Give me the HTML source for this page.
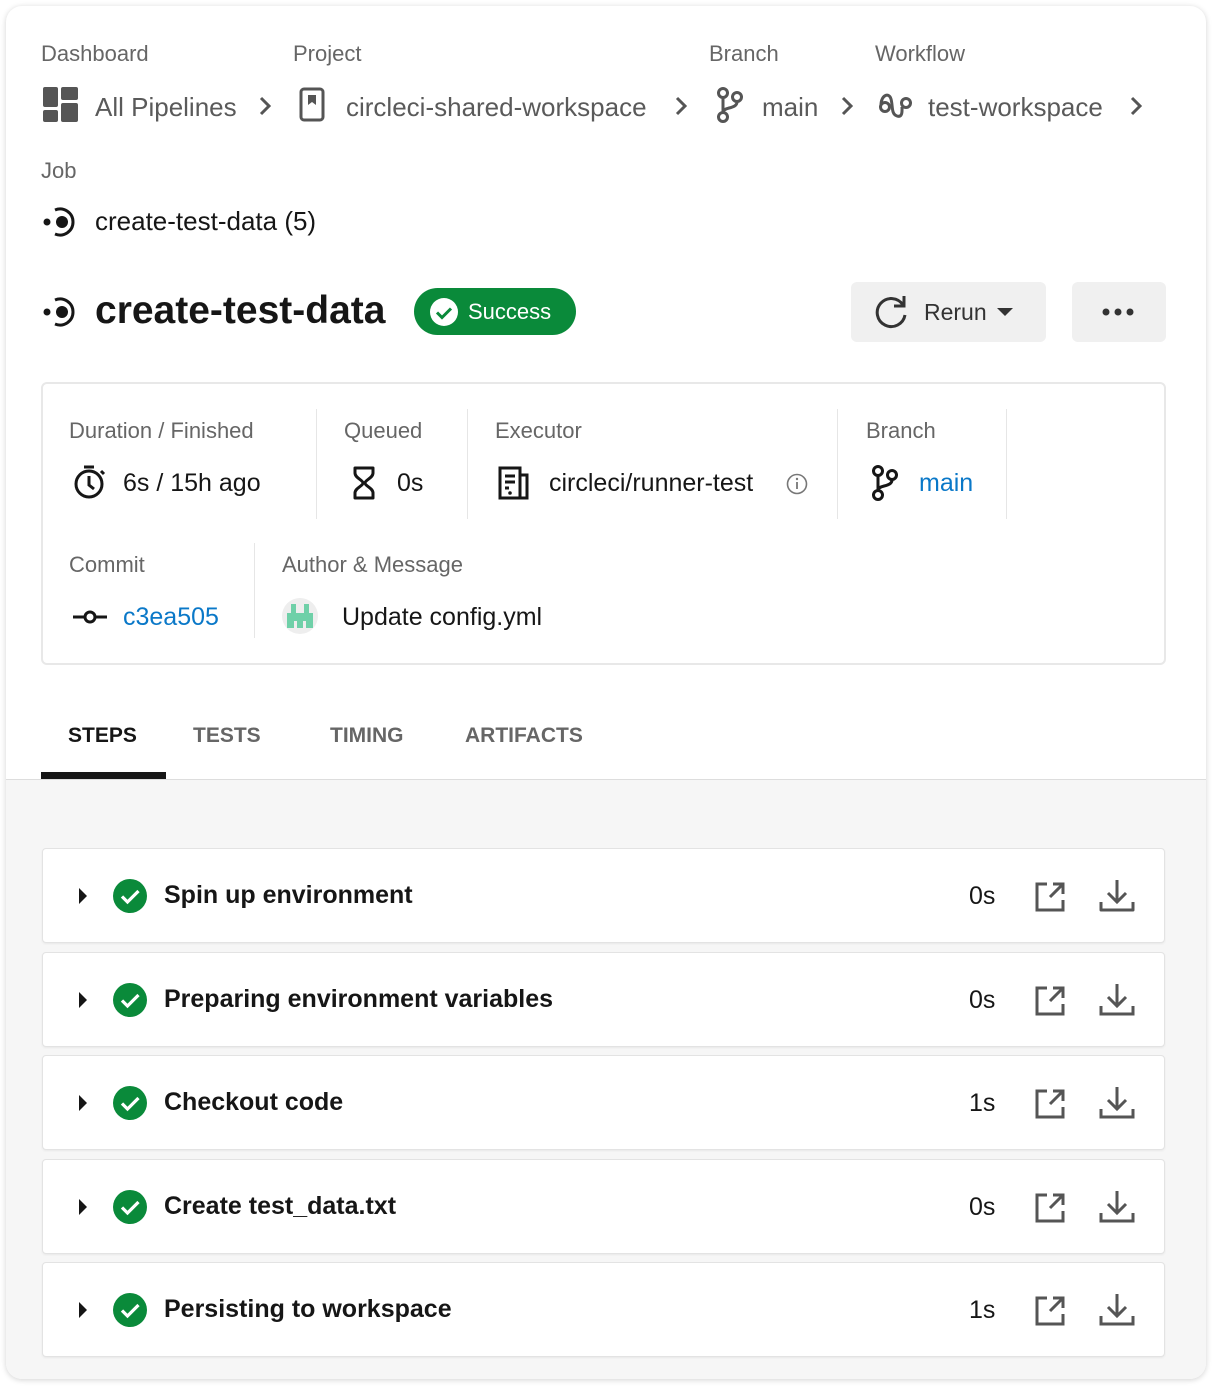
<!DOCTYPE html>
<html><head><meta charset="utf-8"><style>
*{margin:0;padding:0;box-sizing:border-box}
body{width:1220px;height:1392px;background:#fff;font-family:"Liberation Sans",sans-serif;position:relative;overflow:hidden}
.card{position:absolute;left:6px;top:6px;width:1200px;height:1373px;border-radius:16px;background:#fff;box-shadow:0 1px 6px rgba(0,0,0,.18);overflow:hidden}
.gray{position:absolute;left:0;top:773px;width:1200px;height:600px;background:#f6f6f6;border-top:1px solid #ddd}
.a{position:absolute;white-space:nowrap}
.lbl{font-size:22px;color:#666}
.bc{font-size:26px;color:#5a5a5a;top:86px}
.val{font-size:25px;color:#161616}
.sep{position:absolute;width:1px;background:#e6e6e6}
.row{position:absolute;left:36px;width:1123px;height:95px;background:#fff;border:1px solid #e3e3e3;border-radius:4px;box-shadow:0 1px 2px rgba(0,0,0,.06)}
.row .t{position:absolute;left:121px;top:32px;font-size:25px;font-weight:bold;color:#161616}
.row .d{position:absolute;left:926px;top:33px;font-size:25px;color:#161616}
.tab{font-size:21px;font-weight:bold;color:#666;top:718px}
</style></head><body>
<div class="card">
<div class="gray">
<div class="row" style="top:68px"><svg class="a" style="left:34px;top:38px" width="12" height="18"><path d="M2 1l8 8-8 8z" fill="#161616"/></svg><svg class="a" style="left:70px;top:30px" width="34" height="34"><circle cx="17" cy="17" r="17" fill="#0a8a3a"/><path d="M9 17.5l5.5 5.5 11-11" stroke="#fff" stroke-width="3.2" fill="none"/></svg><span class="t">Spin up environment</span><span class="d">0s</span><svg class="a" style="left:990px;top:31px" width="34" height="34"><path d="M14 4H4v26h26V20" stroke="#555" stroke-width="3" fill="none"/><path d="M17 17L29 5M20 4h10v10" stroke="#555" stroke-width="3" fill="none"/></svg><svg class="a" style="left:1056px;top:29px" width="36" height="36"><path d="M18 2v22M9 15l9 9 9-9" stroke="#555" stroke-width="3" fill="none"/><path d="M2 24v8h32v-8" stroke="#555" stroke-width="3" fill="none" stroke-linejoin="round"/></svg></div>
<div class="row" style="top:172px"><svg class="a" style="left:34px;top:38px" width="12" height="18"><path d="M2 1l8 8-8 8z" fill="#161616"/></svg><svg class="a" style="left:70px;top:30px" width="34" height="34"><circle cx="17" cy="17" r="17" fill="#0a8a3a"/><path d="M9 17.5l5.5 5.5 11-11" stroke="#fff" stroke-width="3.2" fill="none"/></svg><span class="t">Preparing environment variables</span><span class="d">0s</span><svg class="a" style="left:990px;top:31px" width="34" height="34"><path d="M14 4H4v26h26V20" stroke="#555" stroke-width="3" fill="none"/><path d="M17 17L29 5M20 4h10v10" stroke="#555" stroke-width="3" fill="none"/></svg><svg class="a" style="left:1056px;top:29px" width="36" height="36"><path d="M18 2v22M9 15l9 9 9-9" stroke="#555" stroke-width="3" fill="none"/><path d="M2 24v8h32v-8" stroke="#555" stroke-width="3" fill="none"/></svg></div>
<div class="row" style="top:275px"><svg class="a" style="left:34px;top:38px" width="12" height="18"><path d="M2 1l8 8-8 8z" fill="#161616"/></svg><svg class="a" style="left:70px;top:30px" width="34" height="34"><circle cx="17" cy="17" r="17" fill="#0a8a3a"/><path d="M9 17.5l5.5 5.5 11-11" stroke="#fff" stroke-width="3.2" fill="none"/></svg><span class="t">Checkout code</span><span class="d">1s</span><svg class="a" style="left:990px;top:31px" width="34" height="34"><path d="M14 4H4v26h26V20" stroke="#555" stroke-width="3" fill="none"/><path d="M17 17L29 5M20 4h10v10" stroke="#555" stroke-width="3" fill="none"/></svg><svg class="a" style="left:1056px;top:29px" width="36" height="36"><path d="M18 2v22M9 15l9 9 9-9" stroke="#555" stroke-width="3" fill="none"/><path d="M2 24v8h32v-8" stroke="#555" stroke-width="3" fill="none"/></svg></div>
<div class="row" style="top:379px"><svg class="a" style="left:34px;top:38px" width="12" height="18"><path d="M2 1l8 8-8 8z" fill="#161616"/></svg><svg class="a" style="left:70px;top:30px" width="34" height="34"><circle cx="17" cy="17" r="17" fill="#0a8a3a"/><path d="M9 17.5l5.5 5.5 11-11" stroke="#fff" stroke-width="3.2" fill="none"/></svg><span class="t">Create test_data.txt</span><span class="d">0s</span><svg class="a" style="left:990px;top:31px" width="34" height="34"><path d="M14 4H4v26h26V20" stroke="#555" stroke-width="3" fill="none"/><path d="M17 17L29 5M20 4h10v10" stroke="#555" stroke-width="3" fill="none"/></svg><svg class="a" style="left:1056px;top:29px" width="36" height="36"><path d="M18 2v22M9 15l9 9 9-9" stroke="#555" stroke-width="3" fill="none"/><path d="M2 24v8h32v-8" stroke="#555" stroke-width="3" fill="none"/></svg></div>
<div class="row" style="top:482px"><svg class="a" style="left:34px;top:38px" width="12" height="18"><path d="M2 1l8 8-8 8z" fill="#161616"/></svg><svg class="a" style="left:70px;top:30px" width="34" height="34"><circle cx="17" cy="17" r="17" fill="#0a8a3a"/><path d="M9 17.5l5.5 5.5 11-11" stroke="#fff" stroke-width="3.2" fill="none"/></svg><span class="t">Persisting to workspace</span><span class="d">1s</span><svg class="a" style="left:990px;top:31px" width="34" height="34"><path d="M14 4H4v26h26V20" stroke="#555" stroke-width="3" fill="none"/><path d="M17 17L29 5M20 4h10v10" stroke="#555" stroke-width="3" fill="none"/></svg><svg class="a" style="left:1056px;top:29px" width="36" height="36"><path d="M18 2v22M9 15l9 9 9-9" stroke="#555" stroke-width="3" fill="none"/><path d="M2 24v8h32v-8" stroke="#555" stroke-width="3" fill="none"/></svg></div>
</div>

<span class="a lbl" style="left:35px;top:35px">Dashboard</span>
<span class="a lbl" style="left:287px;top:35px">Project</span>
<span class="a lbl" style="left:703px;top:35px">Branch</span>
<span class="a lbl" style="left:869px;top:35px">Workflow</span>
<svg class="a" style="left:37px;top:81px" width="36" height="36"><rect x="0" y="0" width="15" height="20" rx="2" fill="#555"/><rect x="18" y="0" width="17" height="13" rx="2" fill="#555"/><rect x="0" y="23" width="15" height="12" rx="2" fill="#555"/><rect x="18" y="16" width="17" height="19" rx="2" fill="#555"/></svg>
<span class="a bc" style="left:89px">All Pipelines</span>
<svg class="a" style="left:252px;top:89px" width="14" height="22"><path d="M3 3l8 8-8 8" stroke="#555" stroke-width="3" fill="none"/></svg>
<svg class="a" style="left:293px;top:81px" width="28" height="36"><rect x="2" y="2" width="22" height="31" rx="3" stroke="#555" stroke-width="3" fill="none"/><path d="M9 8h8v10l-4-3-4 3z" fill="#555"/></svg>
<span class="a bc" style="left:340px">circleci-shared-workspace</span>
<svg class="a" style="left:668px;top:89px" width="14" height="22"><path d="M3 3l8 8-8 8" stroke="#555" stroke-width="3" fill="none"/></svg>
<svg class="a" style="left:710px;top:80px" width="30" height="38"><circle cx="7" cy="7" r="4.5" stroke="#555" stroke-width="3" fill="none"/><circle cx="21" cy="11" r="4.5" stroke="#555" stroke-width="3" fill="none"/><circle cx="7" cy="31" r="4.5" stroke="#555" stroke-width="3" fill="none"/><path d="M7 12v14M21 16c0 7-14 5-14 10" stroke="#555" stroke-width="3" fill="none"/></svg>
<span class="a bc" style="left:756px">main</span>
<svg class="a" style="left:834px;top:89px" width="14" height="22"><path d="M3 3l8 8-8 8" stroke="#555" stroke-width="3" fill="none"/></svg>
<svg class="a" style="left:872px;top:83px" width="36" height="32"><circle cx="7" cy="18" r="4.5" stroke="#555" stroke-width="3" fill="none"/><circle cx="28" cy="14" r="4.5" stroke="#555" stroke-width="3" fill="none"/><path d="M3 16c0-10 8-13 10-6s0 15 6 17 5-6 5-9" stroke="#555" stroke-width="3" fill="none"/></svg>
<span class="a bc" style="left:922px">test-workspace</span>
<svg class="a" style="left:1123px;top:89px" width="14" height="22"><path d="M3 3l8 8-8 8" stroke="#555" stroke-width="3" fill="none"/></svg>

<span class="a lbl" style="left:35px;top:152px">Job</span>
<svg class="a" style="left:37px;top:198px" width="36" height="36"><circle cx="4" cy="18" r="3.5" fill="#161616"/><circle cx="19" cy="18" r="6" fill="#161616"/><path d="M12 6a13 13 0 1 1 0 24" stroke="#161616" stroke-width="3" fill="none"/></svg>
<span class="a" style="left:89px;top:200px;font-size:26px;color:#161616">create-test-data (5)</span>

<svg class="a" style="left:37px;top:288px" width="36" height="36"><circle cx="4" cy="18" r="3.5" fill="#161616"/><circle cx="19" cy="18" r="6" fill="#161616"/><path d="M12 6a13 13 0 1 1 0 24" stroke="#161616" stroke-width="3" fill="none"/></svg>
<span class="a" style="left:89px;top:283px;font-size:39px;font-weight:bold;color:#161616">create-test-data</span>
<div class="a" style="left:408px;top:282px;width:162px;height:47px;border-radius:24px;background:#0a8a3a"></div>
<svg class="a" style="left:423px;top:291px" width="30" height="30"><circle cx="15" cy="15" r="14" fill="#fff"/><path d="M8 15.5l5 5 9-9" stroke="#0a8a3a" stroke-width="3" fill="none"/></svg>
<span class="a" style="left:462px;top:293px;font-size:22px;color:#fff">Success</span>
<div class="a" style="left:845px;top:276px;width:195px;height:60px;border-radius:6px;background:#f0f0f0"></div>
<svg class="a" style="left:867px;top:287px" width="38" height="38"><path d="M30 12A14 14 0 1 0 32 22" stroke="#333" stroke-width="3" fill="none"/><path d="M31 3v10H21" stroke="#333" stroke-width="3" fill="none"/></svg>
<span class="a" style="left:918px;top:293px;font-size:23px;color:#333">Rerun</span>
<svg class="a" style="left:990px;top:301px" width="18" height="10"><path d="M1 1h16l-8 8z" fill="#333"/></svg>
<div class="a" style="left:1066px;top:276px;width:94px;height:60px;border-radius:6px;background:#f0f0f0"></div>
<svg class="a" style="left:1096px;top:301px" width="34" height="10"><circle cx="4" cy="5" r="3.5" fill="#333"/><circle cx="16" cy="5" r="3.5" fill="#333"/><circle cx="28" cy="5" r="3.5" fill="#333"/></svg>

<div class="a" style="left:35px;top:376px;width:1125px;height:283px;border:2px solid #e8e8e8;border-radius:6px"></div>
<span class="a lbl" style="left:63px;top:412px">Duration / Finished</span>
<svg class="a" style="left:66px;top:458px" width="34" height="36"><circle cx="17" cy="20" r="13" stroke="#161616" stroke-width="3" fill="none"/><path d="M17 12v9l5 4M12 3h10M29 7l3 3" stroke="#161616" stroke-width="3" fill="none"/></svg>
<span class="a val" style="left:117px;top:463px">6s / 15h ago</span>
<div class="sep" style="left:310px;top:403px;height:110px"></div>
<span class="a lbl" style="left:338px;top:412px">Queued</span>
<svg class="a" style="left:346px;top:460px" width="24" height="34"><path d="M3 2h18v5c0 5-8 7-8 10s8 5 8 10v5H3v-5c0-5 8-7 8-10S3 12 3 7z" stroke="#161616" stroke-width="3" fill="none" stroke-linejoin="round"/></svg>
<span class="a val" style="left:391px;top:463px">0s</span>
<div class="sep" style="left:461px;top:403px;height:110px"></div>
<span class="a lbl" style="left:489px;top:412px">Executor</span>
<svg class="a" style="left:492px;top:460px" width="32" height="34"><path d="M2 2h20v30H2zM22 9h7v23h-7" stroke="#161616" stroke-width="3" fill="none"/><path d="M7 10h10M7 16h10M7 22h4" stroke="#161616" stroke-width="3"/><circle cx="12" cy="27" r="1.8" fill="#161616"/></svg>
<span class="a val" style="left:543px;top:463px">circleci/runner-test</span>
<svg class="a" style="left:780px;top:467px" width="22" height="22"><circle cx="11" cy="11" r="9.5" stroke="#777" stroke-width="1.6" fill="none"/><path d="M11 9v7" stroke="#777" stroke-width="1.8"/><circle cx="11" cy="6" r="1.2" fill="#777"/></svg>
<div class="sep" style="left:831px;top:403px;height:110px"></div>
<span class="a lbl" style="left:860px;top:412px">Branch</span>
<svg class="a" style="left:865px;top:458px" width="30" height="38"><circle cx="7" cy="7" r="4.5" stroke="#161616" stroke-width="3" fill="none"/><circle cx="21" cy="11" r="4.5" stroke="#161616" stroke-width="3" fill="none"/><circle cx="7" cy="31" r="4.5" stroke="#161616" stroke-width="3" fill="none"/><path d="M7 12v14M21 16c0 7-14 5-14 10" stroke="#161616" stroke-width="3" fill="none"/></svg>
<span class="a val" style="left:913px;top:463px;color:#0a78c8">main</span>
<div class="sep" style="left:1000px;top:403px;height:110px"></div>

<span class="a lbl" style="left:63px;top:546px">Commit</span>
<svg class="a" style="left:66px;top:602px" width="36" height="18"><path d="M1 9h34" stroke="#161616" stroke-width="3"/><circle cx="18" cy="9" r="5" stroke="#161616" stroke-width="3" fill="#fff"/></svg>
<span class="a val" style="left:117px;top:597px;color:#0a78c8">c3ea505</span>
<div class="sep" style="left:248px;top:537px;height:95px"></div>
<span class="a lbl" style="left:276px;top:546px">Author &amp; Message</span>
<svg class="a" style="left:276px;top:592px" width="36" height="36"><circle cx="18" cy="18" r="18" fill="#eee"/><g fill="#6fd0a8"><rect x="9" y="6" width="5" height="9"/><rect x="22" y="6" width="5" height="9"/><rect x="5" y="15" width="26" height="8"/><rect x="5" y="23" width="7" height="7"/><rect x="15" y="23" width="6" height="7"/><rect x="24" y="23" width="7" height="7"/></g></svg>
<span class="a val" style="left:336px;top:597px">Update config.yml</span>

<span class="a tab" style="left:62px;color:#161616">STEPS</span>
<span class="a tab" style="left:187px">TESTS</span>
<span class="a tab" style="left:324px">TIMING</span>
<span class="a tab" style="left:459px">ARTIFACTS</span>
<div class="a" style="left:35px;top:766px;width:125px;height:7px;background:#161616"></div>
</div>
</body></html>
